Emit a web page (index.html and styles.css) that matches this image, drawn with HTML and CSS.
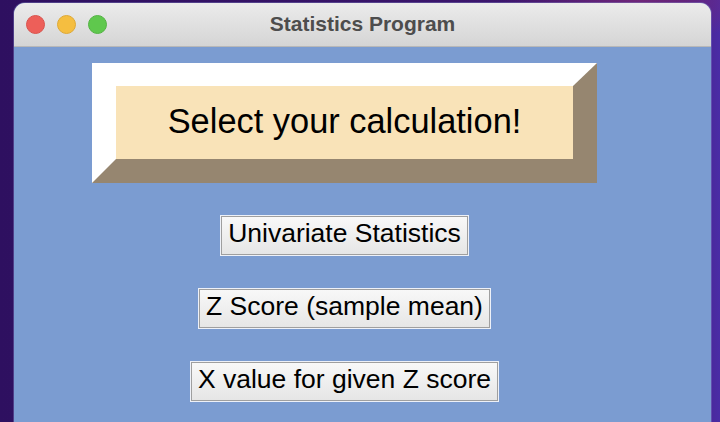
FILE: index.html
```html
<!DOCTYPE html>
<html>
<head>
<meta charset="utf-8">
<title>Statistics Program</title>
<link rel="stylesheet" href="styles.css">
</head>
<body>
<div class="desktop">
  <div class="window">
    <div class="titlebar">
      <div class="lights">
        <span class="light red"></span>
        <span class="light yellow"></span>
        <span class="light green"></span>
      </div>
      <div class="title">Statistics Program</div>
      <div></div>
    </div>
    <div class="content">
      <div class="banner">Select your calculation!</div>
      <button class="btn"><span class="btn-face">Univariate Statistics</span></button>
      <button class="btn"><span class="btn-face">Z Score (sample mean)</span></button>
      <button class="btn"><span class="btn-face">X value for given Z score</span></button>
    </div>
  </div>
</div>
</body>
</html>
```
FILE: styles.css
```css
html, body {
  margin: 0;
  padding: 0;
}

body {
  width: 720px;
  height: 422px;
  overflow: hidden;
  font-family: "Liberation Sans", Arial, Helvetica, sans-serif;
}

.desktop {
  box-sizing: border-box;
  height: 422px;
  padding: 3px 0 0 14px;
  background:
    radial-gradient(ellipse 140px 40px at 640px 0px, rgba(120, 40, 120, 0.8), rgba(120, 40, 120, 0) 100%),
    linear-gradient(90deg, #2e1060 0%, #351366 40%, #3d166e 75%, #4a1f80 95%, #4a2ca6 100%);
  overflow: hidden;
}

.window {
  width: 697px;
  height: 440px;
  border-radius: 11px 11px 0 0;
  overflow: hidden;
  background: #7b9cd1;
  box-shadow: 0 0 0 1px rgba(140, 150, 210, 0.35);
}

.titlebar {
  box-sizing: border-box;
  height: 44px;
  display: grid;
  grid-template-columns: 1fr auto 1fr;
  align-items: center;
  background: linear-gradient(#ebebeb, #d5d5d5);
  border-bottom: 1px solid #b8b8b8;
}

.lights {
  display: flex;
  gap: 12px;
  padding-left: 12px;
  padding-bottom: 1px;
}

.light {
  width: 19px;
  height: 19px;
  border-radius: 50%;
  box-sizing: border-box;
}

.red {
  background: #ed5f59;
  border: 1px solid #d9534d;
}

.yellow {
  background: #f5be40;
  border: 1px solid #dea936;
}

.green {
  background: #5fc84d;
  border: 1px solid #53b343;
}

.title {
  font-size: 21px;
  font-weight: bold;
  color: #4d4d4d;
  padding-bottom: 1px;
}

.content {
  display: flex;
  flex-direction: column;
  align-items: center;
  gap: 32px;
  padding: 16px 36px 0 0;
}

.banner {
  box-sizing: border-box;
  width: 505px;
  height: 120px;
  border-style: solid;
  border-width: 23px 24px 24px 24px;
  border-color: #ffffff #968670 #968670 #ffffff;
  background: #f9e3b8;
  display: flex;
  align-items: center;
  justify-content: center;
  padding-bottom: 3px;
  font-size: 34.4px;
  color: #000;
}

.btn {
  font: inherit;
  margin: 0;
  padding: 0;
  border: 1px solid #eef1f8;
  background: none;
  display: block;
}

.btn-face {
  display: block;
  border: 1px solid #9f9f9f;
  background: linear-gradient(#f8f8f8, #e6e6e6);
  padding: 1px 6px 6px;
  font-size: 26.5px;
  line-height: 30px;
  color: #000;
  white-space: nowrap;
}
```
